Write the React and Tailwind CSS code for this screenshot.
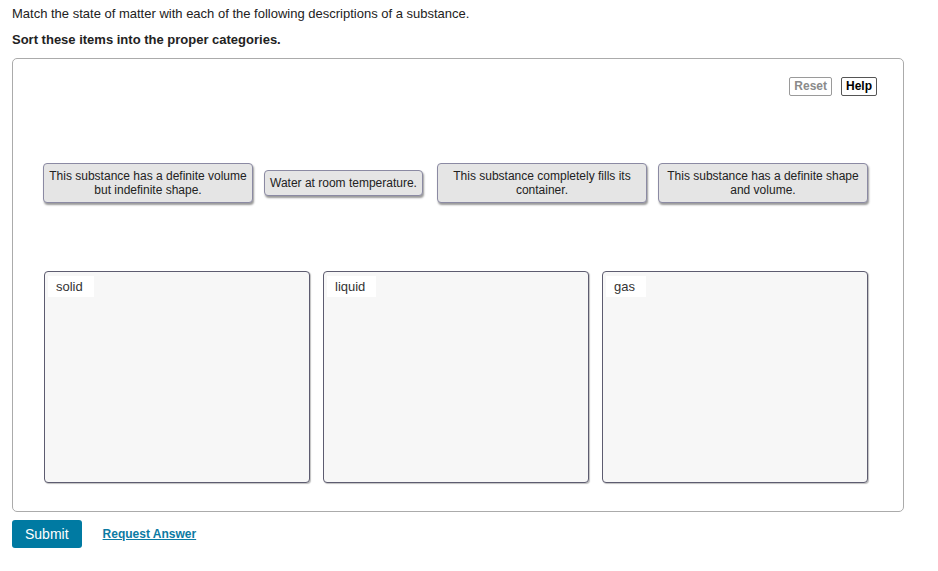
import React from 'react';

const items = [
    { id: 1, text: 'This substance has a definite volume but indefinite shape.' },
    { id: 2, text: 'Water at room temperature.' },
    { id: 3, text: 'This substance completely fills its container.' },
    { id: 4, text: 'This substance has a definite shape and volume.' },
];

const bins = ['solid', 'liquid', 'gas'];

export default function App() {
    return (
        <div className="w-[938px] h-[571px] bg-white text-[#222] px-[12px] pt-[6px]" style={{ fontFamily: '"Liberation Sans", Arial, Helvetica, sans-serif' }}>
            <p className="text-[13px] leading-[16px]">Match the state of matter with each of the following descriptions of a substance.</p>
            <p className="mt-[10px] text-[13px] leading-[16px] font-bold">Sort these items into the proper categories.</p>

            <div className="mt-[10px] w-[892px] h-[454px] border border-[#ababab] rounded-[5px] pt-[18px] pl-[30px] pr-[26px]">
                {/* toolbar */}
                <div className="flex justify-end gap-[9px]">
                    <button className="h-[19px] px-[4px] text-[12px] leading-[17px] font-bold text-[#8a8a8a] border border-[#9a9a9a] rounded-[2px] bg-white">Reset</button>
                    <button className="h-[19px] px-[4px] text-[12px] leading-[17px] font-bold text-black border border-[#555] rounded-[2px] bg-white">Help</button>
                </div>

                {/* draggable items */}
                <div className="mt-[66px] flex items-center h-[42px]">
                    {items.map((item, i) => (
                        <div
                            key={item.id}
                            className={`max-w-[210px] shrink-0 px-[5px] py-[5px] text-center text-[12px] leading-[14px] text-[#222] bg-[#e5e5e5] border border-[#8b8aa3] rounded-[4px] shadow-[1px_2px_2px_rgba(0,0,0,0.4)] ${i === 0 ? '' : i === 2 ? 'ml-[14px]' : 'ml-[11px]'}`}
                        >
                            {item.text}
                        </div>
                    ))}
                </div>

                {/* bins */}
                <div className="mt-[67px] flex gap-[13px] pl-[1px]">
                    {bins.map(name => (
                        <div key={name} className="w-[266px] h-[212px] bg-[#f7f7f7] border border-[#5d5c70] rounded-[4px] shadow-[1px_1px_1px_rgba(0,0,0,0.25)] pt-[2px] pl-[3px]">
                            <span className="inline-block bg-white pl-[8px] pr-[11px] py-[3px] text-[13px] leading-[15px] text-[#333]">{name}</span>
                        </div>
                    ))}
                </div>
            </div>

            <div className="mt-[8px] flex items-center">
                <button className="h-[28px] px-[13px] bg-[#007aa2] text-white text-[14px] rounded-[3px]">Submit</button>
                <a className="ml-[21px] text-[12px] font-bold text-[#0b7aa3] underline">Request Answer</a>
            </div>
        </div>
    );
}
